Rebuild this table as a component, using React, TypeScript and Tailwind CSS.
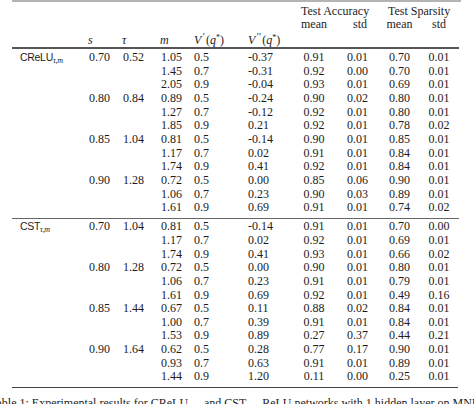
const serif = "font-['Liberation_Serif','Times_New_Roman',serif]";

type Row = [string, string, string, string, string, string, string, string, string];

const crelu: Row[] = [
  ['0.70', '0.52', '1.05', '0.5', '-0.37', '0.91', '0.01', '0.70', '0.01'],
  ['', '', '1.45', '0.7', '-0.31', '0.92', '0.00', '0.70', '0.01'],
  ['', '', '2.05', '0.9', '-0.04', '0.93', '0.01', '0.69', '0.01'],
  ['0.80', '0.84', '0.89', '0.5', '-0.24', '0.90', '0.02', '0.80', '0.01'],
  ['', '', '1.27', '0.7', '-0.12', '0.92', '0.01', '0.80', '0.01'],
  ['', '', '1.85', '0.9', '0.21', '0.92', '0.01', '0.78', '0.02'],
  ['0.85', '1.04', '0.81', '0.5', '-0.14', '0.90', '0.01', '0.85', '0.01'],
  ['', '', '1.17', '0.7', '0.02', '0.91', '0.01', '0.84', '0.01'],
  ['', '', '1.74', '0.9', '0.41', '0.92', '0.01', '0.84', '0.01'],
  ['0.90', '1.28', '0.72', '0.5', '0.00', '0.85', '0.06', '0.90', '0.01'],
  ['', '', '1.06', '0.7', '0.23', '0.90', '0.03', '0.89', '0.01'],
  ['', '', '1.61', '0.9', '0.69', '0.91', '0.01', '0.74', '0.02'],
];

const cst: Row[] = [
  ['0.70', '1.04', '0.81', '0.5', '-0.14', '0.91', '0.01', '0.70', '0.00'],
  ['', '', '1.17', '0.7', '0.02', '0.92', '0.01', '0.69', '0.01'],
  ['', '', '1.74', '0.9', '0.41', '0.93', '0.01', '0.66', '0.02'],
  ['0.80', '1.28', '0.72', '0.5', '0.00', '0.90', '0.01', '0.80', '0.01'],
  ['', '', '1.06', '0.7', '0.23', '0.91', '0.01', '0.79', '0.01'],
  ['', '', '1.61', '0.9', '0.69', '0.92', '0.01', '0.49', '0.16'],
  ['0.85', '1.44', '0.67', '0.5', '0.11', '0.88', '0.02', '0.84', '0.01'],
  ['', '', '1.00', '0.7', '0.39', '0.91', '0.01', '0.84', '0.01'],
  ['', '', '1.53', '0.9', '0.89', '0.27', '0.37', '0.44', '0.21'],
  ['0.90', '1.64', '0.62', '0.5', '0.28', '0.77', '0.17', '0.90', '0.01'],
  ['', '', '0.93', '0.7', '0.63', '0.91', '0.01', '0.89', '0.01'],
  ['', '', '1.44', '0.9', '1.20', '0.11', '0.00', '0.25', '0.01'],
];

// label | s | tau | m | V' | V'' | acc mean | acc std | sp mean | sp std
const cols = 'grid grid-cols-[68px_34px_38px_34px_54px_48px_36px_51px_33px_46px]';

function Label({ name }: { name: string }) {
  return (
    <span className="font-['Liberation_Sans',Arial,sans-serif] text-[10.5px] tracking-[-0.3px]">
      {name}
      <sub className={`${serif} text-[8px] italic`}>τ,m</sub>
    </span>
  );
}

function Deriv({ primes }: { primes: string }) {
  return (
    <span>
      <i>V</i>
      <span className="relative top-[-4px] ml-[1.5px] text-[10px] leading-none">{primes}</span>
      <span className="ml-px">(</span>
      <i>q</i>
      <span className="relative top-[-4px] text-[8px] leading-none">*</span>)
    </span>
  );
}

function Group({ label, rows }: { label: string; rows: Row[] }) {
  return (
    <div>
      {rows.map((r, i) => (
        <div key={i} className={`${cols} h-[13.65px] leading-[13.65px]`}>
          <div>{i === 0 ? <Label name={label} /> : null}</div>
          <div className="pl-px">{r[0]}</div>
          <div className="pl-px">{r[1]}</div>
          <div className="pl-px">{r[2]}</div>
          <div>{r[3]}</div>
          <div>{r[4]}</div>
          <div className="text-center">{r[5]}</div>
          <div className="text-center">{r[6]}</div>
          <div className="text-center">{r[7]}</div>
          <div className="text-center">{r[8]}</div>
        </div>
      ))}
    </div>
  );
}

export default function App() {
  return (
    <div className={`h-[404px] w-[474px] overflow-hidden bg-white ${serif} text-[12px] text-[#1c1c1c]`}>
      <div className="ml-[12px] h-[2px] w-[449px] bg-[#b4b4b4]" />
      <div className="ml-[12px] w-[450px] pl-[8px]">
        <div className={`${cols} mt-[2px] h-[14px] leading-[14px]`}>
          <div className="col-span-6" />
          <div className="col-span-2 pl-[5px]">Test Accuracy</div>
          <div className="col-span-2 pl-[5px]">Test Sparsity</div>
        </div>
        <div className={`${cols} h-[13px] leading-[13px]`}>
          <div className="col-span-6" />
          <div className="text-center">mean</div>
          <div className="pl-[5px] text-center">std</div>
          <div className="text-center">mean</div>
          <div className="text-center">std</div>
        </div>
        <div className={`${cols} h-[16px] pt-[2px] leading-[14px]`}>
          <div />
          <div className="italic">s</div>
          <div className="italic">τ</div>
          <div className="italic">m</div>
          <div>
            <Deriv primes="′" />
          </div>
          <div>
            <Deriv primes="′′" />
          </div>
        </div>
      </div>
      <div className="ml-[12px] h-[1.5px] w-[447px] bg-[#555]" />
      <div className="ml-[12px] w-[450px] pl-[8px] pt-[2.7px]">
        <Group label="CReLU" rows={crelu} />
      </div>
      <div className="ml-[12px] mt-[3.4px] h-px w-[447px] bg-[#666]" />
      <div className="ml-[12px] w-[450px] pl-[8px] pt-[1.1px]">
        <Group label="CST" rows={cst} />
      </div>
      <div className="ml-[12px] mt-[2.8px] h-[1.5px] w-[446px] bg-[#444]" />
      <div className="ml-[-10px] mt-[8px] whitespace-nowrap leading-[14px]">
        Table 1: Experimental results for CReLU<sub>τ,m</sub> and CST<sub>τ,m</sub> ReLU networks with 1 hidden layer on MNIST and
      </div>
    </div>
  );
}
